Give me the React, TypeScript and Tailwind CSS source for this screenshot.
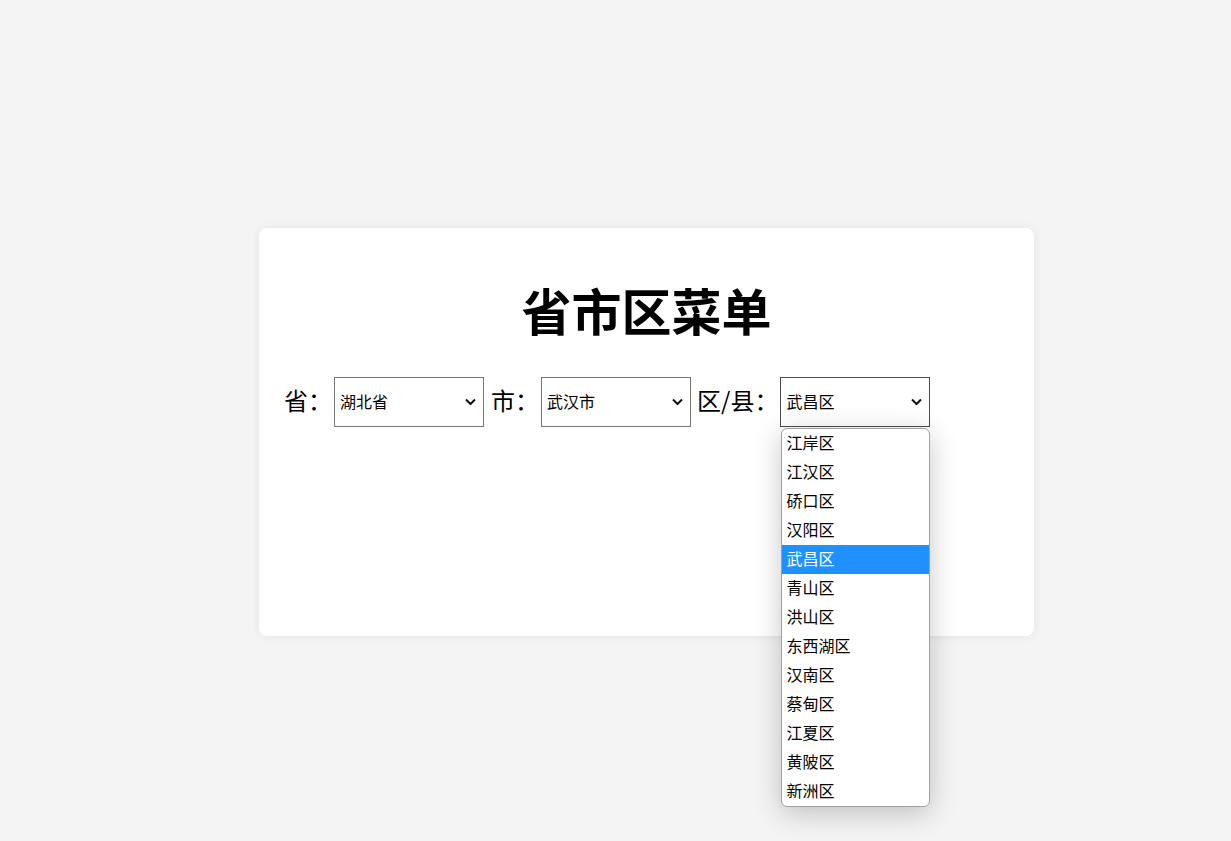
const districts = [
  "江岸区",
  "江汉区",
  "硚口区",
  "汉阳区",
  "武昌区",
  "青山区",
  "洪山区",
  "东西湖区",
  "汉南区",
  "蔡甸区",
  "江夏区",
  "黄陂区",
  "新洲区",
];

const Chevron = () => (
  <svg
    className="pointer-events-none absolute right-[7px] top-1/2 -translate-y-1/2"
    width="11"
    height="7"
    viewBox="0 0 11 7"
    fill="none"
  >
    <path d="M1 1l4.5 4.5L10 1" stroke="#111" strokeWidth="2" />
  </svg>
);

const FakeSelect = ({
  value,
  active = false,
  children,
}: {
  value: string;
  active?: boolean;
  children?: React.ReactNode;
}) => (
  <div
    className={`relative flex h-[50px] w-[150px] items-center bg-white pl-[5px] text-[16px] text-black border ${
      active ? "border-[#4b4b4b]" : "border-[#767676]"
    }`}
  >
    <span className="pb-[2px]">{value}</span>
    <Chevron />
    {children}
  </div>
);

const App = () => {
  const selected = "武昌区";

  return (
    <div
      className="min-h-[841px] bg-[#f4f4f4] pl-[259px] pt-[228px]"
      style={{ fontFamily: '"Noto Sans CJK SC", "Noto Sans", sans-serif' }}
    >
      <div className="h-[408px] w-[775px] rounded-lg bg-white px-[25px] pt-[51px] shadow-[0_0_10px_rgba(0,0,0,0.08)]">
        <h1 className="text-center text-[50px] font-bold leading-[60px] text-black">
          省市区菜单
        </h1>
        <div className="mt-[38px] flex items-center text-[24px] text-black">
          <span className="pb-[4px] leading-none">省：</span>
          <div className="ml-[2px]">
            <FakeSelect value="湖北省" />
          </div>
          <span className="ml-[7px] pb-[4px] leading-none">市：</span>
          <div className="ml-[2px]">
            <FakeSelect value="武汉市" />
          </div>
          <span className="ml-[6px] pb-[4px] leading-none">区/县：</span>
          <div className="ml-[2px]">
            <FakeSelect value={selected} active>
              <ul className="absolute left-0 top-[50px] z-10 w-[149px] overflow-hidden rounded-[6px] border border-[#a0a0a0] bg-white shadow-[0_6px_28px_rgba(0,0,0,0.22)]">
                {districts.map((d) => (
                  <li
                    key={d}
                    className={`flex h-[29px] items-center px-[4px] pb-[4px] text-[16px] ${
                      d === selected ? "bg-[#1e90ff] text-white" : "text-black"
                    }`}
                  >
                    {d}
                  </li>
                ))}
              </ul>
            </FakeSelect>
          </div>
        </div>
      </div>
    </div>
  );
};

export default App;
